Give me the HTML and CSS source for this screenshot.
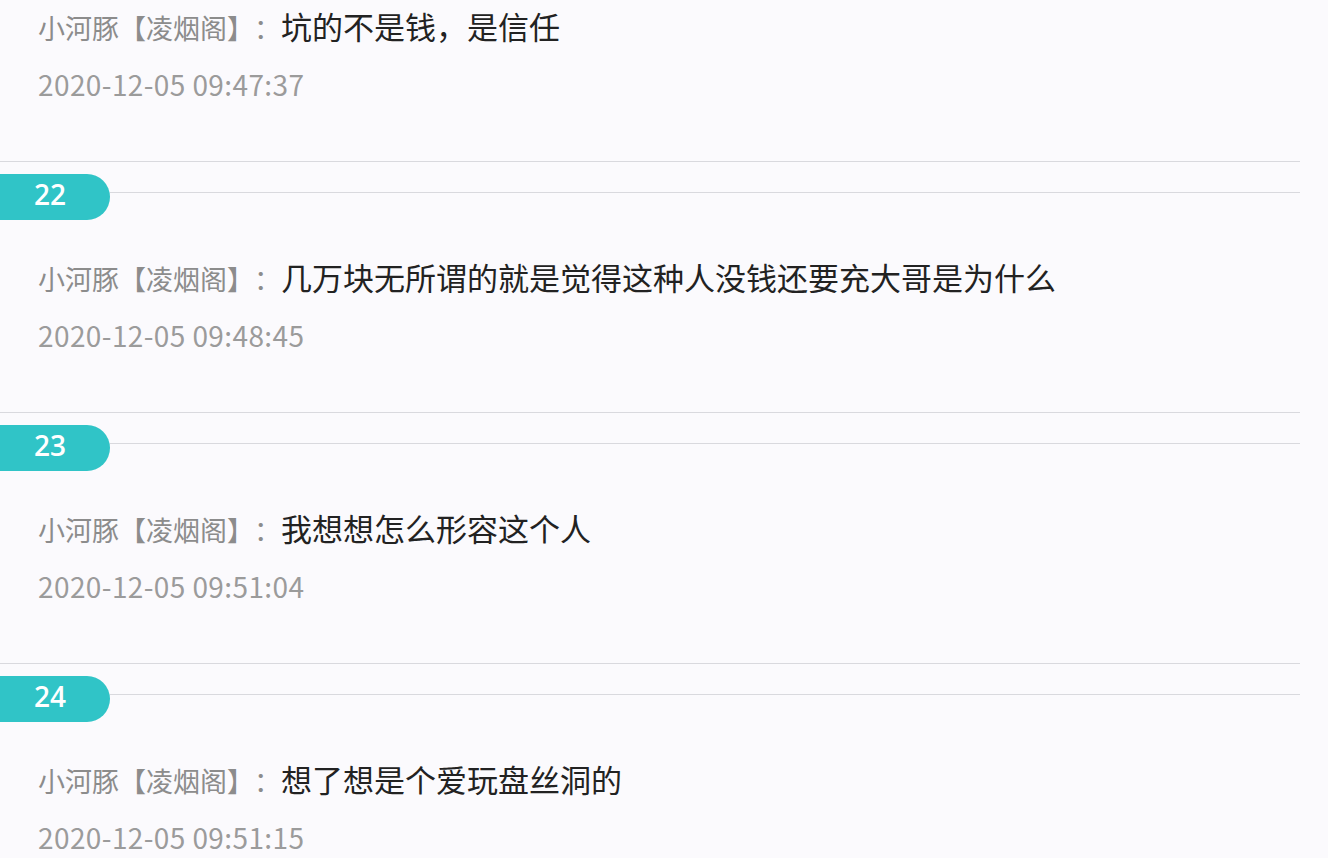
FILE: index.html
```html
<!DOCTYPE html>
<html lang="zh">
<head>
<meta charset="utf-8">
<link rel="stylesheet" href="styles.css">
</head>
<body>
<div class="list">
  <div class="item first">
    <div class="comment"><span class="name">小河豚【凌烟阁】：</span><span class="text">坑的不是钱，是信任</span></div>
    <div class="time">2020-12-05 09:47:37</div>
  </div>
  <div class="item">
    <div class="head"><div class="badge">22</div><div class="rule"></div></div>
    <div class="comment"><span class="name">小河豚【凌烟阁】：</span><span class="text">几万块无所谓的就是觉得这种人没钱还要充大哥是为什么</span></div>
    <div class="time">2020-12-05 09:48:45</div>
  </div>
  <div class="item">
    <div class="head"><div class="badge">23</div><div class="rule"></div></div>
    <div class="comment"><span class="name">小河豚【凌烟阁】：</span><span class="text">我想想怎么形容这个人</span></div>
    <div class="time">2020-12-05 09:51:04</div>
  </div>
  <div class="item">
    <div class="head"><div class="badge">24</div><div class="rule"></div></div>
    <div class="comment"><span class="name">小河豚【凌烟阁】：</span><span class="text">想了想是个爱玩盘丝洞的</span></div>
    <div class="time">2020-12-05 09:51:15</div>
  </div>
</div>
</body>
</html>
```

FILE: styles.css
```css
html, body {
  margin: 0;
  padding: 0;
  background: #fbfafd;
}
body {
  font-family: "Noto Sans CJK SC", "Noto Sans", sans-serif;
  overflow: hidden;
  height: 858px;
}
.list {
  width: 1300px;
}
.item {
  border-top: 1px solid #d9d9de;
  padding-bottom: 59px;
}
.item.first {
  border-top: none;
  padding-top: 6px;
}
.head {
  display: flex;
  align-items: flex-start;
  margin-top: 12px;
  height: 46px;
}
.badge {
  width: 110px;
  height: 46px;
  background: #30c4c7;
  border-radius: 0 23px 23px 0;
  color: #fff;
  font-family: "Open Sans", "Noto Sans", sans-serif;
  font-weight: 600;
  font-size: 28px;
  line-height: 41px;
  padding-left: 34px;
  box-sizing: border-box;
  flex: none;
}
.rule {
  flex: 1;
  height: 1px;
  background: #d9d9de;
  margin-top: 18px;
}
.comment {
  margin-top: 37px;
  padding-left: 38px;
  height: 40px;
  line-height: 40px;
  white-space: nowrap;
  text-spacing-trim: space-all;
}
.first .comment {
  margin-top: 0;
}
.name {
  color: #8c8c8c;
  font-size: 27px;
}
.text {
  color: #222;
  font-size: 31px;
}
.time {
  margin-top: 20px;
  padding-left: 38px;
  height: 36px;
  line-height: 36px;
  color: #9b9b9b;
  font-size: 28px;
  letter-spacing: 0.4px;
}
```
